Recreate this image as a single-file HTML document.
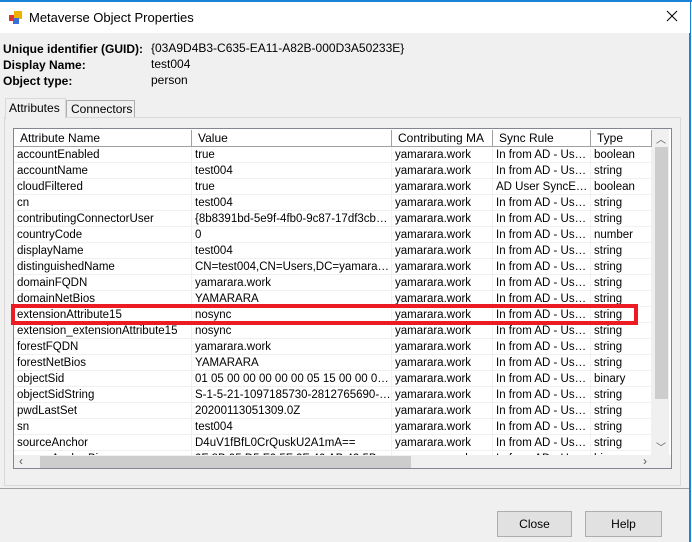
<!DOCTYPE html>
<html><head><style>
*{margin:0;padding:0;box-sizing:border-box}
body{width:692px;height:542px;background:#f0f0f0;font-family:"Liberation Sans","Noto Sans CJK JP",sans-serif;font-size:12px;color:#000;position:relative;overflow:hidden}
.abs{position:absolute}
.title{left:0;top:2px;width:690px;height:31px;background:#fff}
.grid{left:13px;top:128px;width:659px;height:341px;border:1px solid #828790;background:#fff;overflow:hidden}
.hdr{position:absolute;top:1px;height:17px;background:#fff;border-right:1px solid #a0a0a0;border-bottom:1px solid #a0a0a0;padding-left:6px;line-height:16px;white-space:nowrap}
.row{position:absolute;left:0;height:16px;width:640px;border-bottom:1px solid #f0f0f0}
.c{position:absolute;top:0;height:16px;line-height:17px;white-space:nowrap;overflow:hidden;text-overflow:ellipsis;border-right:1px solid #f0f0f0;padding-left:3px;font-size:11.5px}
.btn{background:#e1e1e1;border:1px solid #adadad;text-align:center;line-height:24px}
</style></head><body>
<div class="abs" style="left:0;top:0;width:692px;height:2px;background:#1883d7"></div>
<div class="abs" style="left:689px;top:0;width:2px;height:542px;background:#1883d7"></div>
<div class="abs title"></div>
<div class="abs" style="left:9px;top:11px;width:13px;height:13px">
<div class="abs" style="left:0;top:4px;width:6px;height:6px;background:#d33"></div>
<div class="abs" style="left:5px;top:0;width:8px;height:8px;background:#f0b000"></div>
<div class="abs" style="left:4px;top:7px;width:6px;height:6px;background:#3a6fd8"></div>
</div>
<div class="abs" style="left:29px;top:10px;font-size:13px">Metaverse Object Properties</div>
<svg class="abs" style="left:666px;top:10px" width="12" height="12"><path d="M1 1L11 11M11 1L1 11" stroke="#000" stroke-width="1"/></svg>
<div class="abs" style="left:3px;top:41px;font-weight:bold;line-height:16px">Unique identifier (GUID):<br>Display Name:<br>Object type:</div>
<div class="abs" style="left:151px;top:40px;line-height:16px">{03A9D4B3-C635-EA11-A82B-000D3A50233E}<br>test004<br>person</div>
<div class="abs" style="left:4px;top:117px;width:677px;height:369px;border:1px solid #d9d9d9;background:#f0f0f0"></div>
<div class="abs" style="left:5px;top:98px;width:61px;height:21px;background:#f0f0f0;border:1px solid #d9d9d9;border-bottom:none;padding:2px 0 0 3px">Attributes</div>
<div class="abs" style="left:66px;top:100px;width:69px;height:17px;border:1px solid #adadad;border-bottom:none;padding:1px 0 0 4px">Connectors</div>
<div class="abs grid">
<div class="hdr" style="left:0;width:178px">Attribute Name</div>
<div class="hdr" style="left:178px;width:200px">Value</div>
<div class="hdr" style="left:378px;width:101px">Contributing MA</div>
<div class="hdr" style="left:479px;width:98px">Sync Rule</div>
<div class="hdr" style="left:577px;width:61px">Type</div>
<div id="rows"></div>
<div class="abs" style="left:638px;top:0;width:17px;height:326px;background:#f0f0f0"></div>
<div class="abs" style="left:642px;top:2px;font-size:10px;color:#555">︿</div>
<div class="abs" style="left:641px;top:18px;width:13px;height:252px;background:#cdcdcd"></div>
<div class="abs" style="left:642px;top:310px;font-size:10px;color:#555">﹀</div>
<div class="abs" style="left:0;top:326px;width:657px;height:14px;background:#f0f0f0"></div>
<div class="abs" style="left:26px;top:327px;width:371px;height:12px;background:#cdcdcd"></div>
<div class="abs" style="left:5px;top:325px;color:#555">‹</div>
<div class="abs" style="left:629px;top:325px;color:#555">›</div>
</div>
<div class="abs" style="left:11px;top:304px;width:627px;height:21px;border:4px solid #ed1c24"></div>
<div class="abs" style="left:0;top:488px;width:689px;height:1px;background:#a0a0a0"></div>
<div class="abs btn" style="left:497px;top:511px;width:75px;height:26px">Close</div>
<div class="abs btn" style="left:585px;top:511px;width:77px;height:26px">Help</div>
<script>
var d=[["accountEnabled","true","boolean"],["accountName","test004","string"],["cloudFiltered","true","boolean",1],["cn","test004","string"],["contributingConnectorUser","{8b8391bd-5e9f-4fb0-9c87-17df3cb6…","string"],["countryCode","0","number"],["displayName","test004","string"],["distinguishedName","CN=test004,CN=Users,DC=yamarara,…","string"],["domainFQDN","yamarara.work","string"],["domainNetBios","YAMARARA","string"],["extensionAttribute15","nosync","string"],["extension_extensionAttribute15","nosync","string"],["forestFQDN","yamarara.work","string"],["forestNetBios","YAMARARA","string"],["objectSid","01 05 00 00 00 00 00 05 15 00 00 00…","binary"],["objectSidString","S-1-5-21-1097185730-2812765690-…","string"],["pwdLastSet","20200113051309.0Z","string"],["sn","test004","string"],["sourceAnchor","D4uV1fBfL0CrQuskU2A1mA==","string"],["sourceAnchorBinary","0F 8B 95 D5 F0 5F 2F 40 AB 42 5B…","binary"]];
var h="";d.forEach(function(r,i){h+='<div class="row" style="top:'+(18+i*16)+'px"><div class="c" style="left:0;width:178px">'+r[0]+'</div><div class="c" style="left:178px;width:200px">'+r[1]+'</div><div class="c" style="left:378px;width:101px">yamarara.work</div><div class="c" style="left:479px;width:98px">'+(r[3]?'AD User SyncEx…':'In from AD - Us…')+'</div><div class="c" style="left:577px;width:61px">'+r[2]+'</div></div>'});
document.getElementById("rows").innerHTML=h;
</script>
</body></html>
